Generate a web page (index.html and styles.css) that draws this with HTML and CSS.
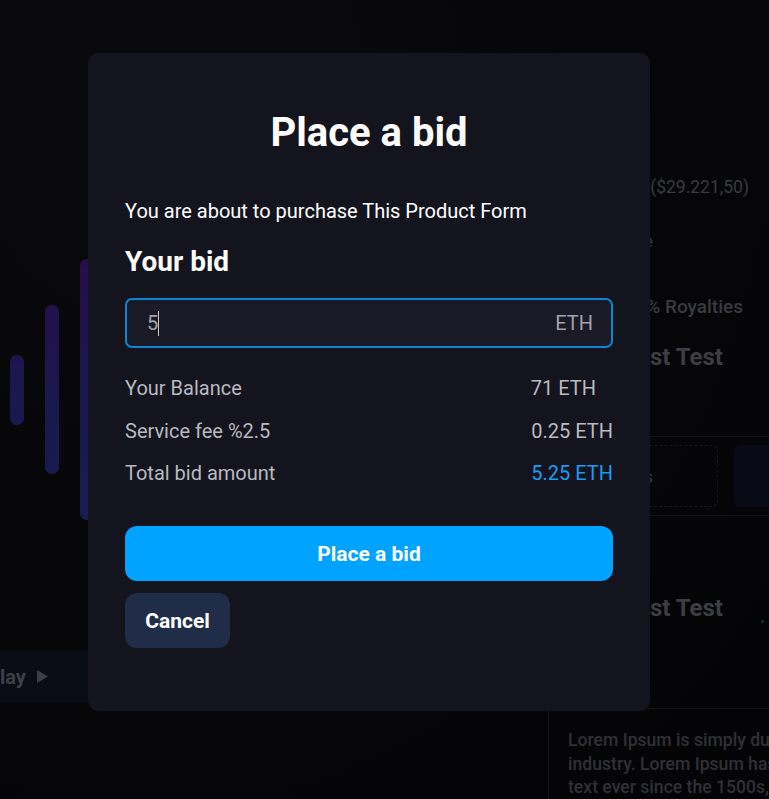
FILE: index.html
```html
<!DOCTYPE html>
<html lang="en">
<head>
<meta charset="utf-8">
<title>Place a bid</title>
<link rel="stylesheet" href="styles.css">
</head>
<body>
<div class="page">
  <div class="left-col">
    <div class="stage">
      <span class="bar bar-short"></span>
      <span class="bar bar-mid"></span>
      <span class="bar bar-tall"></span>
    </div>
    <div class="play-bar">
      <span class="play-text">Play</span>
      <svg class="play-icon" width="11" height="13" viewBox="0 0 11 13"><path d="M0 0 L11 6.5 L0 13 Z" fill="#3d3d44"/></svg>
    </div>
  </div>
  <div class="right-col">
    <div class="info price">10 ETH ($29.221,50)</div>
    <div class="info sale">On Sale</div>
    <div class="info royalties">10% Royalties</div>
    <div class="info name">Test Test</div>
    <div class="tabs">
      <div class="tab tab-dashed"><span class="tab-label">Details</span></div>
      <div class="tab tab-filled"></div>
    </div>
    <div class="info name-row">
      <span class="name-text">Test Test</span>
      <span class="dot"></span>
    </div>
    <div class="desc">
      <p>Lorem Ipsum is simply dummy text of the printing and typesetting<br>industry. Lorem Ipsum has been the industry's standard dummy<br>text ever since the 1500s, when an unknown printer took a galley.</p>
    </div>
  </div>
</div>

<div class="overlay">
  <div class="modal">
    <h1 class="modal-title">Place a bid</h1>
    <p class="modal-lead">You are about to purchase This Product Form</p>
    <h2 class="modal-sub">Your bid</h2>
    <div class="bid-input">
      <span class="bid-value">5<span class="caret"></span></span>
      <span class="bid-unit">ETH</span>
    </div>
    <div class="rows">
      <div class="row"><span>Your Balance</span><span class="balance">71 ETH</span></div>
      <div class="row"><span>Service fee %2.5</span><span>0.25 ETH</span></div>
      <div class="row"><span>Total bid amount</span><span class="total">5.25 ETH</span></div>
    </div>
    <button class="btn btn-primary">Place a bid</button>
    <button class="btn btn-cancel">Cancel</button>
  </div>
</div>
</body>
</html>
```

FILE: styles.css
```css
* { box-sizing: border-box; }

html, body {
  margin: 0;
  padding: 0;
  height: 100%;
}

body {
  background: radial-gradient(ellipse at 20% 10%, #0a0a0c 0%, #060608 60%, #040406 100%);
  font-family: Roboto, "Liberation Sans", Arial, sans-serif;
  overflow: hidden;
  color: #fff;
}

.page {
  display: grid;
  grid-template-columns: 548px 1fr;
  height: 799px;
  overflow: hidden;
}

/* left background column */
.left-col {
  display: flex;
  flex-direction: column;
}

.stage {
  margin-top: 259px;
  height: 261px;
  padding-left: 10px;
  display: flex;
  align-items: center;
  gap: 21px;
}

.bar {
  display: block;
  width: 14px;
  border-radius: 7px;
  background: linear-gradient(180deg, #2c0c54 250px, #1c1a55 400px, #18205a 520px);
  background-attachment: fixed;
  opacity: 0.9;
}

.bar-short { height: 70px; }
.bar-mid { height: 169px; }
.bar-tall { height: 261px; }

.play-bar {
  margin-top: 130px;
  height: 53px;
  width: 300px;
  background: #0a0c15;
  display: flex;
  align-items: center;
  gap: 11px;
}

.play-text {
  margin-left: -13px;
  font-size: 20px;
  font-weight: 700;
  color: #3f3f46;
}

/* right background column */
.right-col {
  display: flex;
  flex-direction: column;
  width: 221px;
}

.info {
  width: 221px;
  text-align: right;
  white-space: nowrap;
  color: #3a3a41;
}

.price {
  margin-top: 175px;
  font-size: 17.5px;
  line-height: 24px;
  padding-right: 20px;
}

.sale {
  margin-top: 30px;
  font-size: 17px;
  line-height: 24px;
  padding-right: 116px;
}

.royalties {
  margin-top: 42px;
  font-size: 19px;
  font-weight: 500;
  line-height: 24px;
  padding-right: 26px;
}

.name {
  margin-top: 23px;
  font-size: 24px;
  font-weight: 700;
  line-height: 30px;
  padding-right: 46px;
  color: #3d3d44;
}

.tabs {
  margin-top: 64px;
  width: 221px;
  height: 80px;
  border-top: 1px solid #131318;
  border-bottom: 1px solid #131318;
  display: flex;
  align-items: center;
  gap: 16px;
}

.tab {
  flex: none;
  height: 62px;
  border-radius: 6px;
}

.tab-dashed {
  width: 170px;
  border: 1px dashed #151519;
  display: flex;
  align-items: center;
  padding-left: 49px;
}

.tab-label {
  font-size: 18px;
  color: #3a3a41;
}

.tab-filled {
  width: 60px;
  background: #080b15;
}

.name-row {
  margin-top: 77px;
  display: flex;
  justify-content: flex-end;
  align-items: flex-end;
  padding-right: 5px;
  font-size: 24px;
  font-weight: 700;
  line-height: 30px;
  color: #3d3d44;
}

.dot {
  width: 3px;
  height: 3px;
  border-radius: 50%;
  background: #12342c;
  margin-left: 38px;
}

.desc {
  margin-top: 85px;
  width: 600px;
  border-top: 1px solid #111116;
  border-left: 1px solid #111116;
  padding: 20px 0 0 19px;
}

.desc p {
  margin: 0;
  white-space: nowrap;
  font-size: 17.6px;
  font-weight: 500;
  line-height: 23.5px;
  color: #303036;
}

/* modal overlay */
.overlay {
  position: fixed;
  inset: 0;
  padding: 53px 0 0 88px;
}

.modal {
  width: 562px;
  height: 658px;
  background: #14141e;
  border-radius: 10px;
  padding: 56px 37px 0;
  display: flex;
  flex-direction: column;
  align-items: flex-start;
}

.modal-title {
  align-self: stretch;
  margin: 0;
  text-align: center;
  font-size: 40px;
  font-weight: 700;
  line-height: 48px;
  color: #fff;
}

.modal-lead {
  margin: 42px 0 0;
  font-size: 20px;
  line-height: 24px;
  color: #fff;
}

.modal-sub {
  margin: 22px 0 0;
  font-size: 28px;
  font-weight: 700;
  line-height: 33px;
  color: #fff;
}

.bid-input {
  margin-top: 20px;
  align-self: stretch;
  height: 50px;
  border: 2px solid #0a86d4;
  border-radius: 7px;
  background: #1a1a26;
  display: flex;
  align-items: center;
  justify-content: space-between;
  padding: 0 18px 0 20px;
  font-size: 20px;
  color: #a2a2aa;
}

.bid-value {
  display: flex;
  align-items: center;
}

.caret {
  display: inline-block;
  width: 1px;
  height: 25px;
  background: #c8c8c8;
}

.rows {
  margin-top: 28px;
  align-self: stretch;
  display: flex;
  flex-direction: column;
  gap: 18.5px;
}

.row {
  display: flex;
  justify-content: space-between;
  font-size: 20px;
  line-height: 24px;
  color: #b9b9c0;
}

.balance { padding-right: 17px; }

.total { color: #169ff2; }

.btn {
  font-family: Roboto, "Liberation Sans", Arial, sans-serif;
  font-size: 21px;
  font-weight: 700;
  color: #fff;
  border: none;
  border-radius: 12px;
  height: 55px;
  cursor: pointer;
}

.btn-primary {
  margin-top: 41px;
  align-self: stretch;
  background: #00a3ff;
}

.btn-cancel {
  margin-top: 12px;
  width: 105px;
  padding: 0;
  background: #202d48;
}
```
